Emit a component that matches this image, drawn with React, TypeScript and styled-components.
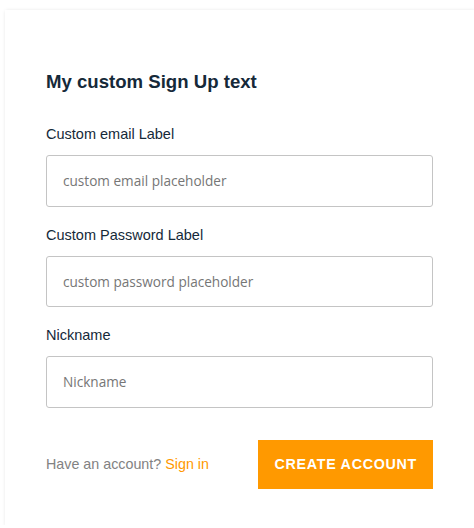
import styled, { createGlobalStyle } from 'styled-components';

const GlobalStyle = createGlobalStyle`
  body {
    margin: 0;
    background: #ffffff;
    font-family: 'Liberation Sans', Arial, sans-serif;
  }
  * {
    box-sizing: border-box;
  }
`;

const fields = [
  { label: 'Custom email Label', placeholder: 'custom email placeholder', type: 'email' },
  { label: 'Custom Password Label', placeholder: 'custom password placeholder', type: 'password' },
  { label: 'Nickname', placeholder: 'Nickname', type: 'text' },
];

export default function App() {
  return (
    <>
      <GlobalStyle />
      <Card>
        <Header>My custom Sign Up text</Header>
        <Fields>
          {fields.map((field) => (
            <Field key={field.label}>
              <Label>{field.label}</Label>
              <Input type={field.type} placeholder={field.placeholder} />
            </Field>
          ))}
        </Fields>
        <Footer>
          <Hint>
            Have an account? <SignInLink href="#">Sign in</SignInLink>
          </Hint>
          <PrimaryButton type="button">Create Account</PrimaryButton>
        </Footer>
      </Card>
    </>
  );
}

const Card = styled.div`
  margin: 10px 0 0 5px;
  width: 469px;
  padding: 60px 41px 36px 41px;
  background: #ffffff;
  box-shadow: 1px 1px 4px 0 rgba(0, 0, 0, 0.15);
`;

const Header = styled.h1`
  margin: 0;
  font-size: 18.6px;
  line-height: 24px;
  font-weight: 700;
  color: #152939;
`;

const Fields = styled.div`
  display: flex;
  flex-direction: column;
  gap: 20px;
  margin-top: 32px;
`;

const Field = styled.div`
  display: flex;
  flex-direction: column;
  gap: 12px;
`;

const Label = styled.label`
  font-size: 14.5px;
  line-height: 17px;
  color: #152939;
`;

const Input = styled.input`
  width: 100%;
  height: 51.5px;
  padding: 0 16px;
  border: 1px solid #c4c4c4;
  border-radius: 3px;
  background: #ffffff;
  font-family: 'Open Sans', sans-serif;
  font-size: 13.6px;
  color: #152939;
  outline: none;

  &::placeholder {
    color: #767676;
  }
`;

const Footer = styled.div`
  display: flex;
  align-items: center;
  justify-content: space-between;
  margin-top: 32px;
`;

const Hint = styled.span`
  font-size: 14.3px;
  color: #828282;
`;

const SignInLink = styled.a`
  color: #ff9900;
  text-decoration: none;
`;

const PrimaryButton = styled.button`
  height: 49px;
  padding: 0 16px 0 17px;
  border: none;
  background: #ff9900;
  color: #ffffff;
  font-family: 'Liberation Sans', Arial, sans-serif;
  font-size: 14.3px;
  font-weight: 700;
  letter-spacing: 0.7px;
  text-transform: uppercase;
  cursor: pointer;
`;
